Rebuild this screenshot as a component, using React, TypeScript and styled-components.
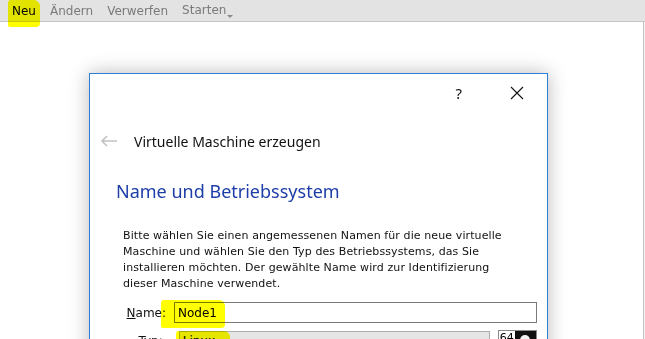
import styled, { createGlobalStyle } from "styled-components";

const GlobalStyle = createGlobalStyle`
  html, body {
    margin: 0;
    padding: 0;
    background: #f0f0f0;
  }
`;

const Page = styled.div`
  width: 645px;
  height: 339px;
  overflow: hidden;
  display: flex;
  flex-direction: column;
  font-family: "DejaVu Sans", sans-serif;
`;

const Toolbar = styled.div`
  height: 21px;
  background: #e3e3e3;
  border-bottom: 1px solid #c6c6c6;
  display: flex;
  align-items: center;
  gap: 14px;
  padding-left: 12px;
  font-size: 12px;
`;

const ToolItem = styled.span<{ $active?: boolean }>`
  position: relative;
  color: ${(p) => (p.$active ? "#000" : "#7a7a7a")};
  white-space: nowrap;
`;

const Marker = styled.span`
  position: absolute;
  background: #ffff00;
  mix-blend-mode: multiply;
  border-radius: 3px 6px 4px 2px;
`;

const DropArrow = styled.span`
  display: inline-block;
  width: 0;
  height: 0;
  margin-left: 1px;
  border-left: 3px solid transparent;
  border-right: 3px solid transparent;
  border-top: 3px solid #8a8a8a;
  vertical-align: -4px;
`;

const Workspace = styled.div`
  flex: 1;
  background: #fff;
  border-right: 1px solid #c4c4c4;
  margin-right: 1px;
  padding: 51px 0 0 89px;
  overflow: hidden;
`;

const Dialog = styled.div`
  width: 457px;
  height: 320px;
  border: 1px solid #2a7fd6;
  background: #fff;
  box-shadow: 0 0 18px rgba(0, 0, 0, 0.28);
  display: flex;
  flex-direction: column;
`;

const TitleBar = styled.div`
  height: 38px;
  display: flex;
  justify-content: flex-end;
  align-items: center;
  padding-right: 23px;
  gap: 48px;
  font-family: "Noto Sans", sans-serif;
  color: #111;
`;

const Help = styled.span`
  font-size: 15px;
`;

const HeaderRow = styled.div`
  display: flex;
  align-items: center;
  height: 22px;
  margin-top: 18px;
  padding-left: 10px;
  gap: 16px;
  font-family: "Noto Sans", sans-serif;
  font-size: 14px;
  color: #111;
`;

const Heading = styled.h2`
  margin: 25px 0 0 26px;
  font-family: "Noto Sans", sans-serif;
  font-weight: 400;
  font-size: 18px;
  line-height: 28px;
  color: #1d3da8;
`;

const Intro = styled.p`
  margin: 23px 0 0 33px;
  width: 390px;
  font-size: 11px;
  letter-spacing: 0.1px;
  line-height: 16px;
  color: #111;
`;

const FormRow = styled.div`
  display: flex;
  align-items: center;
  margin-top: 10px;
  padding-right: 10px;
`;

const Label = styled.span`
  position: relative;
  width: 84px;
  text-align: right;
  padding-right: 8px;
  box-sizing: border-box;
  font-size: 12px;
  color: #111;
`;

const TextBox = styled.div`
  position: relative;
  flex: 1;
  height: 19px;
  border: 1px solid #7a7a7a;
  display: flex;
  align-items: center;
  padding-left: 3px;
  font-size: 12px;
`;

const Combo = styled(TextBox)`
  flex: 0 0 306px;
  background: #e5e5e5;
  border-color: #adadad;
`;

const TypeRow = styled(FormRow)`
  margin-top: 7px;
  gap: 8px;
`;

const Badge = styled.div`
  width: 39px;
  height: 20px;
  display: flex;
  border: 1px solid #8a8a8a;
  overflow: hidden;
`;

const BadgeText = styled.span`
  font-size: 11px;
  padding: 0 1px;
  background: #fff;
  line-height: 14px;
`;

const BadgeIcon = styled.span`
  flex: 1;
  background: #111;
  display: flex;
  justify-content: center;
  padding-top: 4px;
`;

const Dot = styled.span`
  width: 10px;
  height: 10px;
  border-radius: 50%;
  background: #f2f2f2;
`;

export default function App() {
  return (
    <Page>
      <GlobalStyle />
      <Toolbar>
        <ToolItem $active>
          <Marker style={{ left: -4, top: -4, width: 32, height: 27 }} />
          Neu
        </ToolItem>
        <ToolItem>Ändern</ToolItem>
        <ToolItem>Verwerfen</ToolItem>
        <ToolItem>
          Starten
          <DropArrow />
        </ToolItem>
      </Toolbar>
      <Workspace>
        <Dialog>
          <TitleBar>
            <Help>?</Help>
            <svg width="14" height="14" viewBox="0 0 14 14">
              <path d="M1 1L13 13M13 1L1 13" stroke="#111" strokeWidth="1.1" />
            </svg>
          </TitleBar>
          <HeaderRow>
            <svg width="18" height="12" viewBox="0 0 18 12">
              <path
                d="M17 6H2M7 1L2 6L7 11"
                stroke="#c2c2c2"
                strokeWidth="1.6"
                fill="none"
              />
            </svg>
            Virtuelle Maschine erzeugen
          </HeaderRow>
          <Heading>Name und Betriebssystem</Heading>
          <Intro>
            Bitte wählen Sie einen angemessenen Namen für die neue virtuelle
            Maschine und wählen Sie den Typ des Betriebssystems, das Sie
            installieren möchten. Der gewählte Name wird zur Identifizierung
            dieser Maschine verwendet.
          </Intro>
          <FormRow>
            <Label>
              <u>N</u>ame:
            </Label>
            <TextBox>
              Node1
              <Marker style={{ left: -14, top: -3, width: 64, height: 28 }} />
            </TextBox>
          </FormRow>
          <TypeRow>
            <Label>
              <u>T</u>yp:
            </Label>
            <Combo>
              Linux
              <Marker style={{ left: -4, top: -1, width: 54, height: 24 }} />
            </Combo>
            <Badge>
              <BadgeText>64</BadgeText>
              <BadgeIcon>
                <Dot />
              </BadgeIcon>
            </Badge>
          </TypeRow>
        </Dialog>
      </Workspace>
    </Page>
  );
}
